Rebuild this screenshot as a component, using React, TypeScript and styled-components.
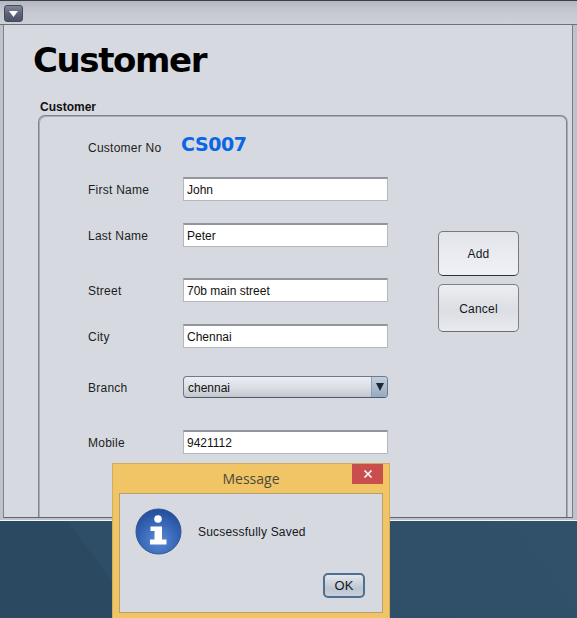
import React from 'react';
import styled, { createGlobalStyle } from 'styled-components';

const GlobalStyle = createGlobalStyle`
  html, body {
    margin: 0;
    padding: 0;
    background: #2f4f68;
  }
  * {
    box-sizing: border-box;
  }
`;

const Desktop = styled.div`
  position: relative;
  width: 577px;
  height: 618px;
  overflow: hidden;
  font-family: 'Liberation Sans', Arial, sans-serif;
  font-size: 12px;
  color: #111;
  background: linear-gradient(54deg, #2b4a61 0 13.4%, #2e4e67 13.6%, #33536d 100%);
`;

const Window = styled.div`
  height: 521px;
  display: flex;
  flex-direction: column;
  background: #bfc2ca;
  border-bottom: 1px solid #f2f3f5;
`;

const TitleBar = styled.div`
  flex: none;
  height: 25px;
  padding: 4px 4px;
  border-top: 1px solid #3a3d44;
  border-bottom: 1px solid #6d717a;
  background: linear-gradient(#b4b7c0, #c5c8d0 45%, #cdd0d7);
`;

const MenuButton = styled.div`
  width: 19px;
  height: 17px;
  display: flex;
  align-items: center;
  justify-content: center;
  border: 1px solid #444b5a;
  border-radius: 3px;
  background: linear-gradient(#7f8799, #5a6274 55%, #4c5366);
`;

const Frame = styled.div`
  flex: 1;
  margin: 0 4px 2px 3px;
  padding: 0 0 0 30px;
  border-left: 1px solid #7e8289;
  border-right: 1px solid #797d85;
  border-bottom: 1px solid #5f636a;
  background: #d6d9e0;
  display: flex;
  flex-direction: column;
`;

const Heading = styled.h1`
  margin: 15px 0 0 -1px;
  height: 45px;
  font-family: 'DejaVu Sans', sans-serif;
  font-size: 34px;
  line-height: 40px;
  font-weight: 700;
  letter-spacing: -1.4px;
  color: #000;
`;

const GroupTitle = styled.div`
  margin: 15px 0 0 6px;
  height: 15px;
  font-weight: 700;
  font-size: 12px;
  line-height: 14px;
`;

const GroupBox = styled.div`
  flex: 1;
  margin: 0 5px 0 4px;
  display: flex;
  border: 1px solid #7f838b;
  border-bottom: 0;
  border-radius: 7px 7px 0 0;
  box-shadow: inset 1px 1px 0 #a9acb4, 1px 0 0 #a9acb4;
  background: #d6d9e0;
`;

const FormColumn = styled.div`
  width: 349px;
  padding-left: 49px;
  display: flex;
  flex-direction: column;
`;

const Row = styled.div<{ $top: number; $height?: number }>`
  margin-top: ${(p) => p.$top}px;
  height: ${(p) => p.$height ?? 24}px;
  display: flex;
  align-items: center;
`;

const Label = styled.span`
  width: 95px;
  flex: none;
  margin-top: 2px;
  font-size: 12px;
  letter-spacing: 0.25px;
  color: #1b1d22;
`;

const CustomerNo = styled.span`
  margin: -6px 0 0 -2px;
  font-family: 'DejaVu Sans', sans-serif;
  font-size: 19px;
  font-weight: 700;
  letter-spacing: -0.4px;
  color: #0a66e6;
`;

const TextField = styled.div`
  width: 205px;
  height: 24px;
  padding: 1px 3px 0;
  display: flex;
  align-items: center;
  border: 1px solid #b5b8bf;
  border-top: 2px solid #92959c;
  background: #fff;
  font-size: 12px;
`;

const SelectField = styled.div`
  width: 205px;
  height: 22px;
  display: flex;
  align-items: center;
  justify-content: space-between;
  padding-left: 4px;
  border: 1px solid #6d7a8b;
  border-bottom-color: #4d5a6c;
  border-radius: 4px;
  background: linear-gradient(#eceef2, #dcdfe5 50%, #c3c6ce);
  overflow: hidden;
`;

const SelectValue = styled.span`
  margin-top: 2px;
`;

const SelectArrow = styled.div`
  width: 16px;
  height: 100%;
  display: flex;
  align-items: center;
  justify-content: center;
  border-left: 1px solid #8ea0b4;
  background: linear-gradient(#c2cfdd, #94aac1);
`;

const ButtonColumn = styled.div`
  padding: 115px 0 0 50px;
  display: flex;
  flex-direction: column;
  gap: 8px;
`;

const ActionButton = styled.button<{ $height: number; $strong?: boolean }>`
  width: 81px;
  height: ${(p) => p.$height}px;
  padding: ${(p) => (p.$strong ? '0' : '2px 0 0')};
  font-family: inherit;
  font-size: 12px;
  letter-spacing: 0.2px;
  color: #15171c;
  border: 1px solid ${(p) => (p.$strong ? '#74787f' : '#7c8088')};
  border-bottom-color: ${(p) => (p.$strong ? '#2f3238' : '#6a6e76')};
  border-radius: 5px;
  background: ${(p) =>
    p.$strong
      ? 'linear-gradient(#e2e4ea, #e9ebf1 50%, #eff1f7)'
      : 'linear-gradient(#eceef2, #dcdee4 55%, #e8eaef)'};
`;

const Dialog = styled.div`
  position: absolute;
  left: 112px;
  top: 463px;
  width: 278px;
  height: 155px;
  display: flex;
  flex-direction: column;
  padding: 0 6px;
  background: #f1c566;
  border: 1px solid #d3ad5e;
  border-bottom: 0;
`;

const DialogTitle = styled.div`
  flex: none;
  height: 29px;
  padding-bottom: 1px;
  display: flex;
  align-items: center;
  justify-content: center;
  font-family: 'Open Sans', sans-serif;
  font-size: 14px;
  color: #4d4a3a;
`;

const CloseButton = styled.div`
  position: absolute;
  top: 0;
  right: 6px;
  width: 31px;
  height: 20px;
  display: flex;
  align-items: center;
  justify-content: center;
  background: #c94f4f;
`;

const DialogBody = styled.div`
  height: 120px;
  padding: 14px 15px 0;
  border: 1px solid #b7a06e;
  background: #d6d9e0;
  display: flex;
  flex-direction: column;
`;

const MessageRow = styled.div`
  display: flex;
  align-items: center;
  gap: 16px;
  height: 47px;
`;

const MessageText = styled.span`
  font-size: 12px;
  letter-spacing: 0.2px;
  color: #16181d;
`;

const DialogFooter = styled.div`
  margin-top: 18px;
  padding-right: 2px;
  display: flex;
  justify-content: flex-end;
`;

const OkButton = styled.button`
  width: 42px;
  height: 25px;
  padding: 0;
  font-family: inherit;
  font-size: 13px;
  color: #15171c;
  border: 2px solid #4f6f91;
  border-radius: 5px;
  background: linear-gradient(#e4e7ed, #bcc6d3 65%, #c9d1dc);
`;

const fields = [
  { label: 'First Name', value: 'John', top: 18 },
  { label: 'Last Name', value: 'Peter', top: 22 },
  { label: 'Street', value: '70b main street', top: 31 },
  { label: 'City', value: 'Chennai', top: 22 },
];

const InfoIcon = () => (
  <svg width="47" height="47" viewBox="0 0 47 47">
    <defs>
      <radialGradient id="infoFill" cx="50%" cy="70%" r="65%">
        <stop offset="0%" stopColor="#5a8ad4" />
        <stop offset="70%" stopColor="#3462b3" />
        <stop offset="100%" stopColor="#26509c" />
      </radialGradient>
    </defs>
    <circle cx="23.5" cy="23.5" r="22.5" fill="url(#infoFill)" stroke="#2f5596" />
    <circle cx="23" cy="11" r="3.8" fill="#fff" />
    <path d="M15.5 18.5H27V31.5H31.5V36.5H15V31.5H19.5V23H15.5Z" fill="#fff" />
  </svg>
);

export default function App() {
  return (
    <>
      <GlobalStyle />
      <Desktop>
        <Window>
          <TitleBar>
            <MenuButton>
              <svg width="9" height="6" viewBox="0 0 9 6">
                <path d="M0 0H9L4.5 6Z" fill="#fff" />
              </svg>
            </MenuButton>
          </TitleBar>
          <Frame>
            <Heading>Customer</Heading>
            <GroupTitle>Customer</GroupTitle>
            <GroupBox>
              <FormColumn>
                <Row $top={19}>
                  <Label>Customer No</Label>
                  <CustomerNo>CS007</CustomerNo>
                </Row>
                {fields.map((f) => (
                  <Row key={f.label} $top={f.top}>
                    <Label>{f.label}</Label>
                    <TextField>{f.value}</TextField>
                  </Row>
                ))}
                <Row $top={28} $height={22}>
                  <Label>Branch</Label>
                  <SelectField>
                    <SelectValue>chennai</SelectValue>
                    <SelectArrow>
                      <svg width="8" height="8" viewBox="0 0 8 8">
                        <path d="M0 0H8L4 8Z" fill="#1d2733" />
                      </svg>
                    </SelectArrow>
                  </SelectField>
                </Row>
                <Row $top={32}>
                  <Label>Mobile</Label>
                  <TextField>9421112</TextField>
                </Row>
              </FormColumn>
              <ButtonColumn>
                <ActionButton $height={45} $strong>
                  Add
                </ActionButton>
                <ActionButton $height={48}>Cancel</ActionButton>
              </ButtonColumn>
            </GroupBox>
          </Frame>
        </Window>
        <Dialog>
          <DialogTitle>Message</DialogTitle>
          <CloseButton>
            <svg width="10" height="10" viewBox="0 0 10 10">
              <path d="M1.5 1.5L8.5 8.5M8.5 1.5L1.5 8.5" stroke="#fff" strokeWidth="1.6" />
            </svg>
          </CloseButton>
          <DialogBody>
            <MessageRow>
              <InfoIcon />
              <MessageText>Sucsessfully Saved</MessageText>
            </MessageRow>
            <DialogFooter>
              <OkButton>OK</OkButton>
            </DialogFooter>
          </DialogBody>
        </Dialog>
      </Desktop>
    </>
  );
}
